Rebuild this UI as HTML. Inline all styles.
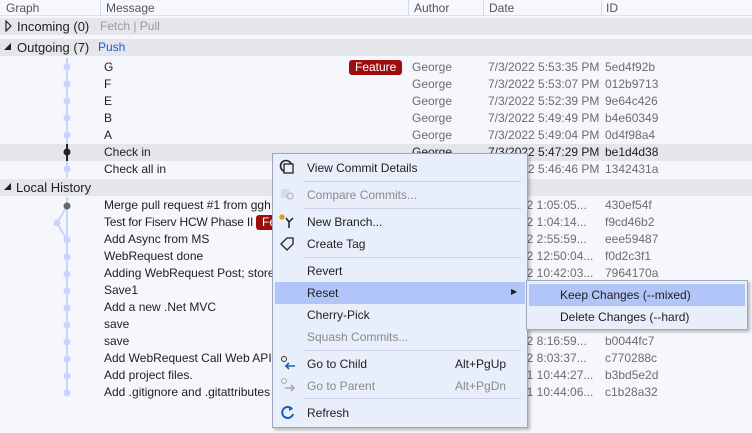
<!DOCTYPE html>
<html><head><style>
*{margin:0;padding:0;box-sizing:border-box}
body{width:752px;height:433px;overflow:hidden;background:#f5f7fc;font-family:"Liberation Sans","DejaVu Sans",sans-serif;font-size:12px;color:#1e1e1e;position:relative}
.a{position:absolute;white-space:nowrap}
.hdr{position:absolute;left:0;top:0;width:752px;height:16px;background:#f7f8fd;border-bottom:1px solid #dfe2ee;color:#555}
.vd{position:absolute;top:0;width:1px;height:16px;background:#d3d8ea}
.sec{position:absolute;left:0;width:752px;height:17px;background:#e5e6ec}
.st{font-size:13px}
.r{position:absolute;height:17px;line-height:17px}
.g{color:#6d6d6d}
.menu{position:absolute;left:272px;top:153px;width:256px;height:275px;background:#e9eefb;border:1px solid #9ea7be;box-shadow:2px 2px 3px rgba(0,0,0,.25)}
.mi{position:absolute;left:34px;height:20px;line-height:20px;font-size:12px}
.sep{position:absolute;left:31px;right:6px;height:1px;background:#c9d1e6}
.dis{color:#8a8a8a}
.tag{position:absolute;background:#9c0e0e;color:#fff;border-radius:3px;height:15px;line-height:15px;padding:0 6px}
</style></head><body>
<div class="hdr">
<span class="a" style="left:6px;top:1px">Graph</span>
<div class="vd" style="left:100px"></div><span class="a" style="left:106px;top:1px">Message</span>
<div class="vd" style="left:408px"></div><span class="a" style="left:414px;top:1px">Author</span>
<div class="vd" style="left:483px"></div><span class="a" style="left:489px;top:1px">Date</span>
<div class="vd" style="left:601px"></div><span class="a" style="left:606px;top:1px">ID</span>
</div>
<div class="sec" style="top:18px"></div>
<svg class="a" style="left:5px;top:20px" width="8" height="12"><path d="M1 1L6 6L1 11Z" fill="none" stroke="#222" stroke-width="1.2"/></svg>
<span class="a st" style="left:17px;top:19px">Incoming (0)</span>
<span class="a" style="left:100px;top:19px;color:#9a9a9a">Fetch | Pull</span>
<div class="sec" style="top:39px"></div>
<svg class="a" style="left:4px;top:43px" width="8" height="8"><path d="M7 0V7H0Z" fill="#222"/></svg>
<span class="a st" style="left:17px;top:40px">Outgoing (7)</span>
<span class="a" style="left:98px;top:40px;color:#1a5fc9">Push</span>
<div style="position:absolute;left:0;top:144px;width:752px;height:17px;background:#e5e6ec"></div>
<div class="sec" style="top:179px"></div>
<svg class="a" style="left:4px;top:183px" width="8" height="8"><path d="M7 0V7H0Z" fill="#222"/></svg>
<span class="a st" style="left:16px;top:180px">Local History</span>
<svg class="a" style="left:0;top:0" width="100" height="433">
<line x1="67" y1="58" x2="67" y2="144" stroke="#c6d5fb" stroke-width="2"/>
<line x1="67" y1="144" x2="67" y2="161" stroke="#222" stroke-width="2"/>
<line x1="67" y1="161" x2="67" y2="178" stroke="#c6d5fb" stroke-width="2"/>
<line x1="67" y1="197" x2="67" y2="396" stroke="#c6d5fb" stroke-width="2"/>
<polyline points="67,206 57,223 67,240" fill="none" stroke="#c6d5fb" stroke-width="2"/>
<g fill="#c6d5fb"><circle cx="67" cy="67" r="3.5"/><circle cx="67" cy="84" r="3.5"/><circle cx="67" cy="101" r="3.5"/><circle cx="67" cy="118" r="3.5"/><circle cx="67" cy="135" r="3.5"/><circle cx="67" cy="169" r="3.5"/>
<circle cx="57" cy="223" r="3.5"/><circle cx="67" cy="240" r="3.5"/><circle cx="67" cy="257" r="3.5"/><circle cx="67" cy="274" r="3.5"/><circle cx="67" cy="291" r="3.5"/><circle cx="67" cy="308" r="3.5"/><circle cx="67" cy="325" r="3.5"/><circle cx="67" cy="342" r="3.5"/><circle cx="67" cy="359" r="3.5"/><circle cx="67" cy="376" r="3.5"/><circle cx="67" cy="393" r="3.5"/></g>
<circle cx="67" cy="152" r="3.5" fill="#222"/><circle cx="67" cy="206" r="3.5" fill="#666"/>
</svg>
<div class="r" style="left:104px;top:59px">G</div><div class="tag" style="left:349px;top:60px">Feature</div>
<div class="r" style="left:104px;top:76px">F</div>
<div class="r" style="left:104px;top:93px">E</div>
<div class="r" style="left:104px;top:110px">B</div>
<div class="r" style="left:104px;top:127px">A</div>
<div class="r" style="left:104px;top:144px">Check in</div>
<div class="r" style="left:104px;top:161px">Check all in</div>
<div class="r g" style="left:412px;top:59px">George</div><div class="r g" style="left:488px;top:59px">7/3/2022 5:53:35 PM</div><div class="r g" style="left:605px;top:59px">5ed4f92b</div>
<div class="r g" style="left:412px;top:76px">George</div><div class="r g" style="left:488px;top:76px">7/3/2022 5:53:07 PM</div><div class="r g" style="left:605px;top:76px">012b9713</div>
<div class="r g" style="left:412px;top:93px">George</div><div class="r g" style="left:488px;top:93px">7/3/2022 5:52:39 PM</div><div class="r g" style="left:605px;top:93px">9e64c426</div>
<div class="r g" style="left:412px;top:110px">George</div><div class="r g" style="left:488px;top:110px">7/3/2022 5:49:49 PM</div><div class="r g" style="left:605px;top:110px">b4e60349</div>
<div class="r g" style="left:412px;top:127px">George</div><div class="r g" style="left:488px;top:127px">7/3/2022 5:49:04 PM</div><div class="r g" style="left:605px;top:127px">0d4f98a4</div>
<div class="r" style="left:412px;top:144px">George</div><div class="r" style="left:488px;top:144px">7/3/2022 5:47:29 PM</div><div class="r" style="left:605px;top:144px">be1d4d38</div>
<div class="r g" style="left:488px;top:161px">7/3/2022 5:46:46 PM</div><div class="r g" style="left:605px;top:161px">1342431a</div>
<div class="r" style="left:104px;top:197px">Merge pull request #1 from ggh</div>
<div class="r" style="left:104px;top:214px;letter-spacing:-0.2px">Test for Fiserv HCW Phase II</div><div class="tag" style="left:256px;top:215px">Fe</div>
<div class="r" style="left:104px;top:231px">Add Async from MS</div>
<div class="r" style="left:104px;top:248px">WebRequest done</div>
<div class="r" style="left:104px;top:265px">Adding WebRequest Post; stores</div>
<div class="r" style="left:104px;top:282px">Save1</div>
<div class="r" style="left:104px;top:299px">Add a new .Net MVC</div>
<div class="r" style="left:104px;top:316px">save</div>
<div class="r" style="left:104px;top:333px">save</div>
<div class="r" style="left:104px;top:350px">Add WebRequest Call Web API</div>
<div class="r" style="left:104px;top:367px">Add project files.</div>
<div class="r" style="left:104px;top:384px">Add .gitignore and .gitattributes</div>
<div class="r g" style="left:520px;top:197px">22 1:05:05...</div><div class="r g" style="left:605px;top:197px">430ef54f</div>
<div class="r g" style="left:520px;top:214px">22 1:04:14...</div><div class="r g" style="left:605px;top:214px">f9cd46b2</div>
<div class="r g" style="left:520px;top:231px">22 2:55:59...</div><div class="r g" style="left:605px;top:231px">eee59487</div>
<div class="r g" style="left:520px;top:248px">22 12:50:04...</div><div class="r g" style="left:605px;top:248px">f0d2c3f1</div>
<div class="r g" style="left:520px;top:265px">22 10:42:03...</div><div class="r g" style="left:605px;top:265px">7964170a</div>
<div class="r g" style="left:520px;top:333px">22 8:16:59...</div><div class="r g" style="left:605px;top:333px">b0044fc7</div>
<div class="r g" style="left:520px;top:350px">22 8:03:37...</div><div class="r g" style="left:605px;top:350px">c770288c</div>
<div class="r g" style="left:520px;top:367px">21 10:44:27...</div><div class="r g" style="left:605px;top:367px">b3bd5e2d</div>
<div class="r g" style="left:520px;top:384px">21 10:44:06...</div><div class="r g" style="left:605px;top:384px">c1b28a32</div>

<div class="menu">
<svg class="a" style="left:6px;top:5px" width="16" height="16"><circle cx="7" cy="7" r="5.5" fill="none" stroke="#222" stroke-width="1.6"/><rect x="5" y="5" width="9" height="9" fill="#e9eefb" stroke="#222" stroke-width="1.3"/></svg>
<div class="mi" style="top:4px">View Commit Details</div>
<div class="sep" style="top:27px"></div>
<svg class="a" style="left:7px;top:32px" width="16" height="16"><rect x="1" y="3" width="8" height="9" fill="#d8dce6"/><circle cx="10" cy="10" r="3" fill="none" stroke="#bbb" stroke-width="1.3"/></svg>
<div class="mi dis" style="top:31px">Compare Commits...</div>
<div class="sep" style="top:54px"></div>
<svg class="a" style="left:6px;top:59px" width="16" height="16"><path d="M3 1V7M0 4H6M1 2L5 6M5 2L1 6" stroke="#e08a00" stroke-width="1"/><path d="M10 15V9M10 9L7 5M10 9L14 5" stroke="#222" stroke-width="1.5" fill="none"/></svg>
<div class="mi" style="top:58px">New Branch...</div>
<svg class="a" style="left:6px;top:82px" width="16" height="16"><path d="M2 8L8 2H14V8L8 14Z" fill="none" stroke="#222" stroke-width="1.3"/></svg>
<div class="mi" style="top:80px">Create Tag</div>
<div class="sep" style="top:103px"></div>
<div class="mi" style="top:107px">Revert</div>
<div style="position:absolute;left:2px;top:128px;width:250px;height:22px;background:#b2c5f8"></div>
<div class="mi" style="top:129px">Reset</div>
<span class="a" style="left:238px;top:133px;font-size:8px">&#9654;</span>
<div class="mi" style="top:151px">Cherry-Pick</div>
<div class="mi dis" style="top:173px">Squash Commits...</div>
<div class="sep" style="top:196px"></div>
<svg class="a" style="left:7px;top:201px" width="16" height="16"><circle cx="4" cy="4" r="2.5" fill="none" stroke="#333"/><path d="M15 11H6M9 8L6 11L9 14" stroke="#1a5fb4" stroke-width="1.6" fill="none"/></svg>
<div class="mi" style="top:200px">Go to Child</div><div class="mi" style="left:182px;top:200px">Alt+PgUp</div>
<svg class="a" style="left:7px;top:223px" width="16" height="16"><circle cx="4" cy="4" r="2.5" fill="none" stroke="#aaa"/><path d="M5 11H14M11 8L14 11L11 14" stroke="#aaa" stroke-width="1.6" fill="none"/></svg>
<div class="mi dis" style="top:222px">Go to Parent</div><div class="mi dis" style="left:182px;top:222px">Alt+PgDn</div>
<div class="sep" style="top:244px"></div>
<svg class="a" style="left:7px;top:250px" width="16" height="16"><path d="M12 5A5.5 5.5 0 1 0 13 10" fill="none" stroke="#1a5fb4" stroke-width="2"/><path d="M9 2L13 5L9 7Z" fill="#1a5fb4"/></svg>
<div class="mi" style="top:249px">Refresh</div>
</div>
<div style="position:absolute;left:526px;top:280px;width:222px;height:50px;background:#e9eefb;border:1px solid #9ea7be;box-shadow:2px 2px 3px rgba(0,0,0,.25)">
<div style="position:absolute;left:2px;top:3px;width:216px;height:22px;background:#b2c5f8"></div>
<div class="mi" style="left:33px;top:4px">Keep Changes (--mixed)</div>
<div class="mi" style="left:33px;top:26px">Delete Changes (--hard)</div>
</div>
</body></html>
